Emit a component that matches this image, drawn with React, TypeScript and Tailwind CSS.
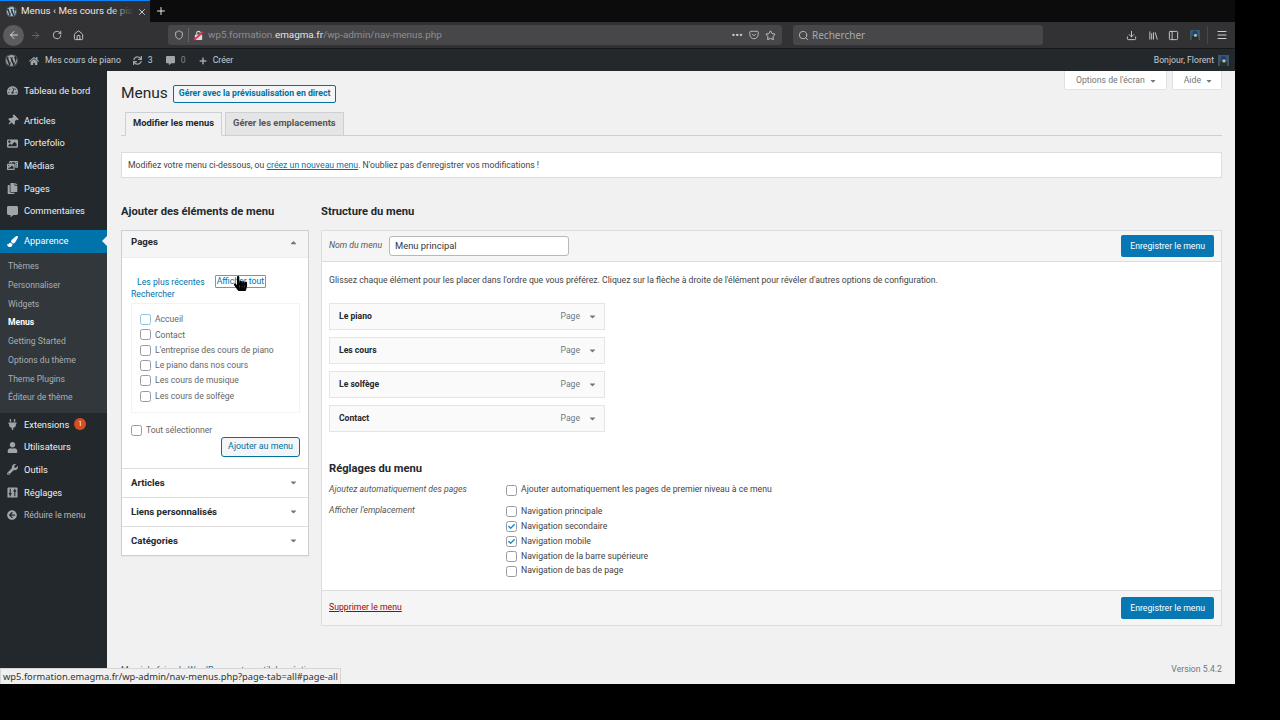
import React from "react";
import { FaWordpress, FaTachometerAlt, FaThumbtack, FaImage, FaPhotoVideo, FaCopy, FaCommentAlt, FaPaintBrush, FaPlug, FaUser, FaWrench, FaArrowCircleLeft, FaHome, FaSync, FaPlus, FaCheck, FaHandPointer, FaCaretDown, FaCaretUp } from "react-icons/fa";
import { ArrowLeft, ArrowRight, RotateCw, Home, Shield, Star, Search, Download, Library, PanelLeft, Menu, X, Plus, Pocket } from "lucide-react";

const Avatar = ({ s }: { s: number }) => (
  <svg width={s} height={s} viewBox="0 0 12 12" className="shrink-0">
    <rect width="12" height="12" fill="#3a5a6a" />
    <circle cx="6" cy="4" r="3" fill="#1c3f7c" />
    <rect x="2" y="7" width="8" height="5" fill="#27302a" />
    <rect x="5" y="5" width="3" height="3" fill="#c9c9b0" />
  </svg>
);

const SlashedLock = () => (
  <svg width="11" height="11" viewBox="0 0 12 12" className="shrink-0">
    <rect x="2" y="5" width="8" height="6" rx="1" fill="#d8d8d8" />
    <path d="M4 5V3.5a2 2 0 0 1 4 0V5" fill="none" stroke="#d8d8d8" strokeWidth="1.2" />
    <path d="M1 11L11 2" stroke="#e22850" strokeWidth="2" />
  </svg>
);

const SettingsIcon = () => (
  <svg width="11" height="11" viewBox="0 0 12 12">
    <rect x="0.5" y="0.5" width="11" height="11" rx="1" fill="#a0a5aa" />
    <path d="M3.5 2v8M8.5 2v8" stroke="#23282d" strokeWidth="1.2" />
    <rect x="2" y="6.5" width="3" height="1.6" fill="#23282d" />
    <rect x="7" y="3.5" width="3" height="1.6" fill="#23282d" />
  </svg>
);

const Box = ({ checked, focus }: { checked?: boolean; focus?: boolean }) => (
  <span className={`box-content flex h-[9px] w-[9px] shrink-0 items-center justify-center rounded-[2.5px] border bg-white ${focus ? "border-[#8cc3dd]" : "border-[#969ba1]"}`}>
    {checked && <FaCheck className="text-[7px] text-[#1e8cbe]" />}
  </span>
);

const Main = ({ icon, label }: { icon: React.ReactNode; label: string }) => (
  <div className="flex h-[22.7px] items-center pl-[7px] text-[9.3px] text-[#eeeeee]">
    <span className="flex w-[17px] text-[11px] text-[#a0a5aa]">{icon}</span>
    <span>{label}</span>
  </div>
);

const sub = ["Thèmes", "Personnaliser", "Widgets", "Menus", "Getting Started", "Options du thème", "Theme Plugins", "Éditeur de thème"];

const Sidebar = () => (
  <aside className="flex w-[107px] shrink-0 flex-col bg-[#23282d] pt-[8.5px]">
    <Main icon={<FaTachometerAlt />} label="Tableau de bord" />
    <div className="h-[7px]" />
    <Main icon={<FaThumbtack className="rotate-45" />} label="Articles" />
    <Main icon={<FaImage />} label="Portefolio" />
    <Main icon={<FaPhotoVideo />} label="Médias" />
    <Main icon={<FaCopy />} label="Pages" />
    <Main icon={<FaCommentAlt />} label="Commentaires" />
    <div className="h-[7px]" />
    <div className="relative flex h-[23px] items-center bg-[#0073aa] pl-[7px] text-[9.3px] text-white">
      <span className="flex w-[17px] text-[11px]"><FaPaintBrush /></span>
      Apparence
      <span className="absolute right-0 top-[6px] h-0 w-0 border-y-[5px] border-r-[5px] border-y-transparent border-r-[#f1f1f1]" />
    </div>
    <div className="flex flex-col bg-[#32373c] pb-[6px] pt-[4.5px]">
      {sub.map((t) => (
        <div key={t} className={`flex h-[18.75px] items-center pl-[8px] text-[8.6px] ${t === "Menus" ? "font-bold text-white" : "text-[#a9aeb3]"}`}>{t}</div>
      ))}
    </div>
    <div className="flex h-[22.7px] items-center pl-[7px] text-[9.3px] text-[#eeeeee]">
      <span className="flex w-[17px] text-[11px] text-[#a0a5aa]"><FaPlug /></span>
      Extensions
      <span className="ml-[5px] flex h-[12px] w-[12px] items-center justify-center rounded-full bg-[#d54e21] text-[7px] text-white">1</span>
    </div>
    <Main icon={<FaUser />} label="Utilisateurs" />
    <Main icon={<FaWrench />} label="Outils" />
    <Main icon={<SettingsIcon />} label="Réglages" />
    <div className="flex h-[22.7px] items-center pl-[7px] text-[8.6px] text-[#b4b9be]">
      <span className="flex w-[17px] text-[10px] text-[#a0a5aa]"><FaArrowCircleLeft /></span>
      Réduire le menu
    </div>
  </aside>
);

const Browser = () => (
  <>
    <div className="flex h-[22px] items-stretch bg-[#0c0c0d]">
      <div className="flex w-[150px] items-center gap-[4px] border-t border-[#0a84ff] bg-[#323234] pl-[6px] pr-[7px] text-[9.8px] text-[#e8e8e8]">
        <FaWordpress className="shrink-0 text-[11px] text-[#9fc6dc]" />
        <span className="relative flex-1 whitespace-nowrap">
          Menus ‹ Mes cours de pia
          <span className="absolute right-0 top-0 h-full w-[22px] bg-gradient-to-r from-transparent to-[#323234]" />
        </span>
        <X size={10} className="shrink-0" />
      </div>
      <div className="flex w-[21px] items-center justify-center text-[#e8e8e8]"><Plus size={12} /></div>
    </div>
    <div className="flex h-[27px] items-center border-b border-[#18181a] bg-[#323234]">
      <span className="ml-[3px] flex h-[21px] w-[21px] items-center justify-center rounded-full bg-[#5c5c5e] text-[#d8d8d8]"><ArrowLeft size={12} /></span>
      <ArrowRight size={11} className="ml-[6px] text-[#6a6a6c]" />
      <RotateCw size={10} className="ml-[11px] text-[#cfcfcf]" />
      <Home size={11} className="ml-[11px] text-[#cfcfcf]" />
      <div className="ml-[84px] flex h-[20px] w-[614px] items-center rounded-[3px] bg-[#47474a] px-[6px] text-[9.9px]">
        <Shield size={10} className="text-[#cfcfcf]" />
        <span className="mx-[4px] h-[14px] w-px bg-[#666]" />
        <SlashedLock />
        <span className="ml-[4px] flex-1 whitespace-nowrap text-[#8f8f91]">wp5.formation.<span className="text-[#e4e4e4]">emagma.fr</span>/wp-admin/nav-menus.php</span>
        <span className="text-[9px] font-bold leading-none tracking-[0.5px] text-[#cfcfcf]">•••</span>
        <Pocket size={10} className="ml-[6px] text-[#cfcfcf]" />
        <Star size={11} className="ml-[6px] text-[#cfcfcf]" />
      </div>
      <div className="ml-[11px] flex h-[20px] w-[250px] items-center rounded-[3px] bg-[#47474a] px-[5px] text-[10px] text-[#a8a8aa]" style={{ fontFamily: "'Noto Sans', sans-serif" }}>
        <Search size={11} className="mr-[3px] text-[#bdbdbd]" />Rechercher
      </div>
      <Download size={11} className="ml-[83px] text-[#cfcfcf]" />
      <Library size={11} className="ml-[11px] text-[#cfcfcf]" />
      <PanelLeft size={11} className="ml-[9px] text-[#cfcfcf]" />
      <span className="ml-[11px]"><Avatar s={10} /></span>
      <span className="ml-[7px] h-[18px] w-px bg-[#47474a]" />
      <Menu size={12} className="ml-[8px] text-[#cfcfcf]" />
    </div>
    <div className="flex h-[22px] items-center bg-[#23282d] pl-[5px] pr-[6px] pt-[1px] text-[8.7px] text-[#c8cbce]">
      <FaWordpress className="text-[13px] text-[#a0a5aa]" />
      <FaHome className="ml-[11px] text-[10px] text-[#a0a5aa]" />
      <span className="ml-[6px]">Mes cours de piano</span>
      <FaSync className="ml-[12px] text-[9px] text-[#a0a5aa]" />
      <span className="ml-[6px]">3</span>
      <FaCommentAlt className="ml-[13px] text-[9px] text-[#a0a5aa]" />
      <span className="ml-[6px] text-[#80868b]">0</span>
      <FaPlus className="ml-[13px] text-[8px] text-[#a0a5aa]" />
      <span className="ml-[6px]">Créer</span>
      <span className="ml-auto">Bonjour, Florent</span>
      <span className="ml-[4px]"><Avatar s={11} /></span>
    </div>
  </>
);

const Tab = ({ children, active }: { children: React.ReactNode; active?: boolean }) => (
  <div className={`-mb-px flex h-[24px] items-center border border-[#ccd0d4] px-[7px] pb-[1px] text-[9.4px] font-bold ${active ? "border-b-[#f1f1f1] bg-[#f1f1f1] text-[#23282d]" : "bg-[#e5e5e5] text-[#555]"}`}>{children}</div>
);

const Acc = ({ t }: { t: string }) => (
  <div className="flex h-[29px] items-center justify-between border-t border-[#dddddd] pl-[9px] pr-[10px] text-[9.6px] font-bold text-[#23282d]">
    {t}<FaCaretDown className="text-[9px] text-[#72777c]" />
  </div>
);

const pages = ["Accueil", "Contact", "L'entreprise des cours de piano", "Le piano dans nos cours", "Les cours de musique", "Les cours de solfège"];

const LeftCol = () => (
  <div className="w-[188px] shrink-0">
    <h2 className="flex h-[19px] items-center text-[11.2px] font-bold text-[#23282d]">Ajouter des éléments de menu</h2>
    <div className="mt-[8px] border border-[#ccd0d4] bg-white shadow-[0_1px_1px_rgba(0,0,0,0.04)]">
      <div className="flex h-[27px] items-center justify-between border-b border-[#eeeeee] bg-[#f5f5f5] pb-[3px] pl-[9px] pr-[10px] text-[9.6px] font-bold text-[#23282d]">
        Pages<FaCaretUp className="text-[9px] text-[#72777c]" />
      </div>
      <div className="pb-[11px] pl-[9px] pr-[8px] pt-[17px]">
        <div className="relative h-[24px] text-[8.7px] leading-[12px] text-[#0073aa]">
          <div className="flex items-center">
            <span className="ml-[6px] pr-[6px]">Les plus récentes</span>
            <span className="ml-[4px] rounded-[1px] border border-[#5b9dd9] px-[1px] leading-[11px] text-[#0073aa]">Afficher tout</span>
          </div>
          <div>Rechercher</div>
          <FaHandPointer className="absolute left-[102px] top-[1px] text-[15px] text-black" />
        </div>
        <div className="mt-[4px] flex flex-col border border-[#f3f3f3] pb-[8px] pl-[8px] pt-[8px] text-[8.6px] text-[#666]">
          {pages.map((p, i) => (
            <label key={p} className="flex h-[15.3px] items-center gap-[4px]"><Box focus={i === 0} /><span>{p}</span></label>
          ))}
        </div>
        <div className="mt-[11px] flex h-[13px] items-center gap-[4px] text-[8.6px] text-[#666]"><Box /><span>Tout sélectionner</span></div>
        <div className="flex justify-end">
          <span className="flex h-[20px] items-center rounded-[3px] border border-[#0071a1] bg-[#f3f5f6] px-[6px] text-[8.9px] text-[#0071a1]">Ajouter au menu</span>
        </div>
      </div>
      <Acc t="Articles" />
      <Acc t="Liens personnalisés" />
      <Acc t="Catégories" />
    </div>
  </div>
);

const items = ["Le piano", "Les cours", "Le solfège", "Contact"];

const SaveBtn = () => (
  <span className="flex h-[22px] items-center rounded-[2px] bg-[#0878b4] px-[9px] pt-[1px] text-[8.7px] text-white">Enregistrer le menu</span>
);

const opts: [string, boolean][] = [
  ["Navigation principale", false],
  ["Navigation secondaire", true],
  ["Navigation mobile", true],
  ["Navigation de la barre supérieure", false],
  ["Navigation de bas de page", false],
];

const RightCol = () => (
  <div className="min-w-0 flex-1">
    <h2 className="flex h-[19px] items-center text-[11.2px] font-bold text-[#23282d]">Structure du menu</h2>
    <div className="mt-[8px] border border-[#dddddd] bg-white">
      <div className="flex h-[31px] items-center justify-between border-b border-[#dddddd] bg-[#f5f5f5] px-[7px]">
        <div className="flex items-center">
          <span className="text-[8.7px] italic text-[#555]">Nom du menu</span>
          <span className="ml-[7px] flex h-[20px] w-[180px] items-center rounded-[3px] border border-[#b4b9be] bg-white px-[5px] text-[9.4px] text-[#32373c]">Menu principal</span>
        </div>
        <SaveBtn />
      </div>
      <div className="px-[7px]">
        <p className="mt-[12px] h-[12px] text-[8.7px] leading-[12px] text-[#444]">Glissez chaque élément pour les placer dans l'ordre que vous préférez. Cliquez sur la flèche à droite de l'élément pour révéler d'autres options de configuration.</p>
        <div className="mt-[17px] flex w-[276px] flex-col gap-[7px]">
          {items.map((t) => (
            <div key={t} className="flex h-[27px] items-center justify-between border border-[#e5e5e5] bg-[#fafafa] pl-[9px] pr-[7px]">
              <span className="text-[8.6px] font-bold text-[#23282d]">{t}</span>
              <span className="flex items-center gap-[8px] text-[8.6px] text-[#72777c]">Page<FaCaretDown className="text-[9px]" /></span>
            </div>
          ))}
        </div>
        <h3 className="mt-[30px] h-[14px] text-[11.2px] font-bold leading-[14px] text-[#23282d]">Réglages du menu</h3>
        <div className="mt-[8px] flex h-[12px] items-center">
          <span className="w-[176px] whitespace-nowrap text-[8.7px] italic text-[#555]">Ajoutez automatiquement des pages</span>
          <span className="ml-[1px] flex items-center gap-[4px] text-[8.7px] text-[#444]"><Box />Ajouter automatiquement les pages de premier niveau à ce menu</span>
        </div>
        <div className="mt-[8px] flex">
          <span className="h-[12px] w-[176px] text-[8.7px] italic leading-[12px] text-[#555]">Afficher l'emplacement</span>
          <div className="ml-[1px] flex flex-col">
            {opts.map(([t, c]) => (
              <div key={t} className="flex h-[14.9px] items-center gap-[4px] text-[8.7px] text-[#444]"><Box checked={c} />{t}</div>
            ))}
          </div>
        </div>
      </div>
      <div className="mt-[12px] flex h-[35px] items-center justify-between border-t border-[#dddddd] bg-[#f5f5f5] px-[7px]">
        <span className="pb-[2px] text-[8.7px] text-[#a00] underline">Supprimer le menu</span>
        <SaveBtn />
      </div>
    </div>
  </div>
);

const Content = () => (
  <main className="relative min-w-0 flex-1 bg-[#f1f1f1] pl-[14px] pr-[13px]">
    <div className="absolute right-[13px] top-0 flex gap-[5px] text-[8.7px] text-[#72777c]">
      <span className="flex h-[19px] items-center gap-[4px] rounded-b-[2px] border border-t-0 border-[#dfe1e3] bg-white pl-[11px] pr-[9px] pt-[2px]">Options de l'écran<FaCaretDown className="text-[8px]" /></span>
      <span className="flex h-[19px] items-center gap-[4px] rounded-b-[2px] border border-t-0 border-[#dfe1e3] bg-white pl-[11px] pr-[8px] pt-[2px]">Aide<FaCaretDown className="text-[8px]" /></span>
    </div>
    <div className="flex h-[41px] items-end gap-[5px] pb-[8px]">
      <h1 className="text-[15.5px] leading-[22px] text-[#23282d]">Menus</h1>
      <span className="mb-[1px] flex h-[18px] items-center rounded-[2px] border border-[#0071a1] bg-[#f3f5f6] px-[5px] text-[8.7px] font-bold text-[#0071a1]">Gérer avec la prévisualisation en direct</span>
    </div>
    <div className="flex h-[24px] gap-[3px] border-b border-[#ccd0d4] pl-[4px]">
      <Tab active>Modifier les menus</Tab>
      <Tab>Gérer les emplacements</Tab>
    </div>
    <div className="mt-[16px] flex h-[26px] items-center border border-[#dddddd] bg-white px-[6px] pt-[1px] text-[8.7px] text-[#444]">
      <span>Modifiez votre menu ci-dessous, ou <span className="text-[#0073aa] underline">créez un nouveau menu</span>. N'oubliez pas d'enregistrer vos modifications !</span>
    </div>
    <div className="mt-[25px] flex gap-[12px]">
      <LeftCol />
      <RightCol />
    </div>
    <div className="absolute bottom-[8px] right-[13px] text-[8.7px] text-[#72777c]">Version 5.4.2</div>
    <div className="absolute bottom-[7px] left-[14px] text-[8.7px] text-[#555]">Merci de faire de <span className="text-[#0073aa] underline">WordPress</span> votre outil de création.</div>
    <div className="absolute bottom-0 left-[-107px] flex h-[16px] items-center border border-b-0 border-[#d6d6d6] bg-[#f0f0f0] px-[2px] text-[9.33px] text-[#333]" style={{ fontFamily: "'Noto Sans', sans-serif" }}>wp5.formation.emagma.fr/wp-admin/nav-menus.php?page-tab=all#page-all</div>
  </main>
);

export default function App() {
  return (
    <div className="h-[720px] w-[1280px] overflow-hidden bg-black" style={{ fontFamily: "Roboto, sans-serif" }}>
      <div className="flex h-[684px] w-[1235px] flex-col">
        <Browser />
        <div className="flex min-h-0 flex-1">
          <Sidebar />
          <Content />
        </div>
      </div>
    </div>
  );
}
